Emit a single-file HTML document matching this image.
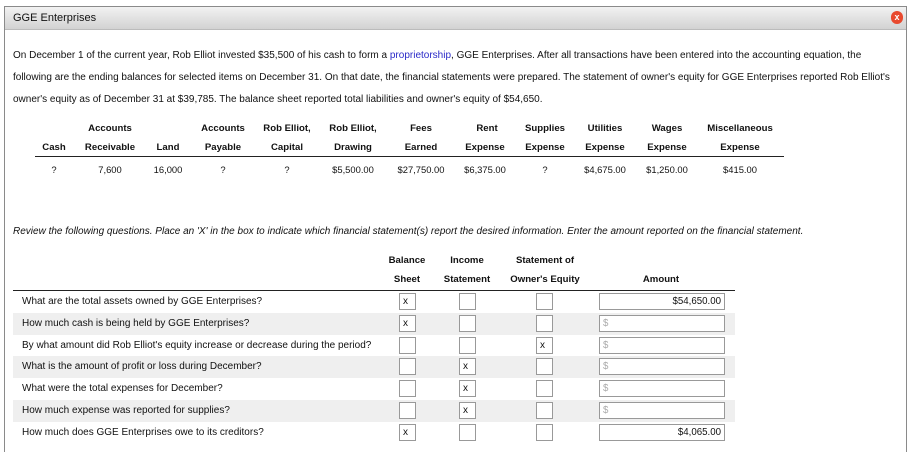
<!DOCTYPE html>
<html><head><meta charset="utf-8"><style>
*{margin:0;padding:0;box-sizing:border-box}
html,body{width:912px;height:452px;overflow:hidden}
body{background:#fff;font-family:"Liberation Sans",Arial,sans-serif;color:#111;position:relative}
.frame{position:absolute;left:4px;top:6px;width:903px;height:446px;border:1px solid #8a8a8a;border-bottom:none}
.title{position:absolute;left:5px;top:7px;width:901px;height:23px;background:linear-gradient(#f2f2f2,#d2d2d2);border-bottom:1px solid #bbb}
.title span{position:absolute;left:8px;top:5px;font-size:11px}
.x{position:absolute;left:891px;top:11px;width:12px;height:13px;border-radius:6px;background:#e8492e;color:#fff;font-size:9px;font-weight:bold;text-align:center;line-height:13px}
.t{position:absolute;font-size:10px;white-space:nowrap}
.p{position:absolute;left:13px;font-size:10px;white-space:nowrap}
a{color:#2a2ac8}
.h{position:absolute;font-size:9.6px;font-weight:bold;transform:translateX(-50%);white-space:nowrap}
.v{position:absolute;font-size:9.4px;transform:translateX(-50%);white-space:nowrap}
.row{position:absolute;left:13px;width:722px;height:22px}
.row.g{background:#efefef}
.q{position:absolute;left:9px;top:5px;font-size:10px;white-space:nowrap}
.cb{position:absolute;width:17px;height:17px;border:1px solid #999;background:#fff;font-size:10px;line-height:15px;padding-left:3px;top:2px}
.am{position:absolute;left:586px;top:2px;width:126px;height:17px;border:1px solid #999;background:#fff;font-size:9.7px;line-height:15px;text-align:right;padding-right:3px}
.am.e{text-align:left;color:#aaa;padding-left:3px}
</style></head><body>
<div class="frame"></div>
<div class="title"><span>GGE Enterprises</span></div>
<div class="x">x</div>
<div class="p" style="top:50px">On December 1 of the current year, Rob Elliot invested $35,500 of his cash to form a <a>proprietorship</a>, GGE Enterprises. After all transactions have been entered into the accounting equation, the</div>
<div class="p" style="top:72px">following are the ending balances for selected items on December 31. On that date, the financial statements were prepared. The statement of owner's equity for GGE Enterprises reported Rob Elliot's</div>
<div class="p" style="top:94px">owner's equity as of December 31 at $39,785. The balance sheet reported total liabilities and owner's equity of $54,650.</div>

<div class="h" style="left:110px;top:123px">Accounts</div>
<div class="h" style="left:223px;top:123px">Accounts</div>
<div class="h" style="left:287px;top:123px">Rob Elliot,</div>
<div class="h" style="left:353px;top:123px">Rob Elliot,</div>
<div class="h" style="left:421px;top:123px">Fees</div>
<div class="h" style="left:487px;top:123px">Rent</div>
<div class="h" style="left:545px;top:123px">Supplies</div>
<div class="h" style="left:605px;top:123px">Utilities</div>
<div class="h" style="left:667px;top:123px">Wages</div>
<div class="h" style="left:740px;top:123px">Miscellaneous</div>
<div class="h" style="left:54px;top:142px">Cash</div>
<div class="h" style="left:110px;top:142px">Receivable</div>
<div class="h" style="left:168px;top:142px">Land</div>
<div class="h" style="left:223px;top:142px">Payable</div>
<div class="h" style="left:287px;top:142px">Capital</div>
<div class="h" style="left:353px;top:142px">Drawing</div>
<div class="h" style="left:421px;top:142px">Earned</div>
<div class="h" style="left:485px;top:142px">Expense</div>
<div class="h" style="left:545px;top:142px">Expense</div>
<div class="h" style="left:605px;top:142px">Expense</div>
<div class="h" style="left:667px;top:142px">Expense</div>
<div class="h" style="left:740px;top:142px">Expense</div>
<div style="position:absolute;left:35px;top:156px;width:749px;height:1px;background:#222"></div>
<div class="v" style="left:54px;top:164px">?</div>
<div class="v" style="left:110px;top:164px">7,600</div>
<div class="v" style="left:168px;top:164px">16,000</div>
<div class="v" style="left:223px;top:164px">?</div>
<div class="v" style="left:287px;top:164px">?</div>
<div class="v" style="left:353px;top:164px">$5,500.00</div>
<div class="v" style="left:421px;top:164px">$27,750.00</div>
<div class="v" style="left:485px;top:164px">$6,375.00</div>
<div class="v" style="left:545px;top:164px">?</div>
<div class="v" style="left:605px;top:164px">$4,675.00</div>
<div class="v" style="left:667px;top:164px">$1,250.00</div>
<div class="v" style="left:740px;top:164px">$415.00</div>

<div class="t" style="left:13px;top:226px;font-style:italic">Review the following questions. Place an 'X' in the box to indicate which financial statement(s) report the desired information. Enter the amount reported on the financial statement.</div>

<div class="h" style="left:407px;top:255px">Balance</div>
<div class="h" style="left:467px;top:255px">Income</div>
<div class="h" style="left:545px;top:255px">Statement of</div>
<div class="h" style="left:407px;top:274px">Sheet</div>
<div class="h" style="left:467px;top:274px">Statement</div>
<div class="h" style="left:545px;top:274px">Owner's Equity</div>
<div class="h" style="left:661px;top:274px">Amount</div>
<div style="position:absolute;left:13px;top:290px;width:722px;height:1px;background:#222"></div>

<div class="row" style="top:291px"><div class="q">What are the total assets owned by GGE Enterprises?</div><div class="cb" style="left:386px">x</div><div class="cb" style="left:446px"></div><div class="cb" style="left:523px"></div><div class="am">$54,650.00</div></div>
<div class="row g" style="top:313px"><div class="q">How much cash is being held by GGE Enterprises?</div><div class="cb" style="left:386px">x</div><div class="cb" style="left:446px"></div><div class="cb" style="left:523px"></div><div class="am e">$</div></div>
<div class="row" style="top:335px"><div class="q">By what amount did Rob Elliot's equity increase or decrease during the period?</div><div class="cb" style="left:386px"></div><div class="cb" style="left:446px"></div><div class="cb" style="left:523px">x</div><div class="am e">$</div></div>
<div class="row g" style="top:356px"><div class="q">What is the amount of profit or loss during December?</div><div class="cb" style="left:386px"></div><div class="cb" style="left:446px">x</div><div class="cb" style="left:523px"></div><div class="am e">$</div></div>
<div class="row" style="top:378px"><div class="q">What were the total expenses for December?</div><div class="cb" style="left:386px"></div><div class="cb" style="left:446px">x</div><div class="cb" style="left:523px"></div><div class="am e">$</div></div>
<div class="row g" style="top:400px"><div class="q">How much expense was reported for supplies?</div><div class="cb" style="left:386px"></div><div class="cb" style="left:446px">x</div><div class="cb" style="left:523px"></div><div class="am e">$</div></div>
<div class="row" style="top:422px"><div class="q">How much does GGE Enterprises owe to its creditors?</div><div class="cb" style="left:386px">x</div><div class="cb" style="left:446px"></div><div class="cb" style="left:523px"></div><div class="am">$4,065.00</div></div>
</body></html>
